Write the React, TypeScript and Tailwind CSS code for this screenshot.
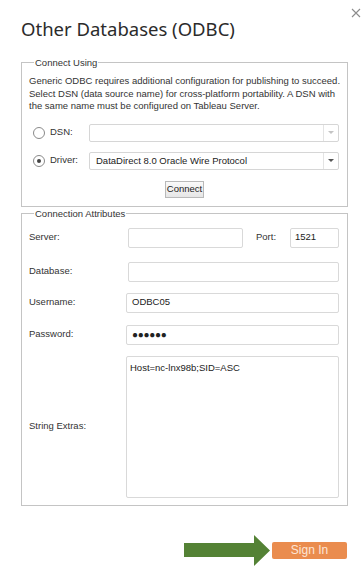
import React from 'react';

const uiFont = { fontFamily: '"Liberation Sans", Arial, sans-serif' };

const Radio: React.FC<{ checked?: boolean }> = ({ checked }) => (
  <div className="w-[12px] h-[12px] rounded-full border border-[#8a8a8a] bg-white flex items-center justify-center shrink-0">
    {checked && <div className="w-[4px] h-[4px] rounded-full bg-[#444]" />}
  </div>
);

const Select: React.FC<{ value?: string; disabled?: boolean }> = ({ value, disabled }) => (
  <div className="flex-1 h-[18px] border border-[#d6d6d6] rounded-[2px] bg-white flex items-center">
    <div className="flex-1 pl-[6px] text-[9.5px] text-[#222] leading-none">{value}</div>
    <div className="w-[15px] h-full border-l border-[#e4e4e4] flex items-center justify-center">
      <div
        className={`w-0 h-0 border-l-[3px] border-r-[3px] border-t-[3px] border-l-transparent border-r-transparent ${
          disabled ? 'border-t-[#c4c4c4]' : 'border-t-[#555]'
        }`}
      />
    </div>
  </div>
);

const Field: React.FC<{ value?: React.ReactNode; className?: string }> = ({ value, className }) => (
  <div
    className={`h-[20px] border border-[#d9d9d9] rounded-[2px] bg-white flex items-center pl-[5px] text-[9.5px] text-[#222] ${className ?? ''}`}
  >
    {value}
  </div>
);

export default function App() {
  return (
    <div className="w-[364px] h-[571px] bg-white relative text-[#333]" style={uiFont}>
      {/* close button */}
      <svg className="absolute left-[351px] top-[8px]" width="10" height="10" viewBox="0 0 10 10">
        <path d="M1 1 L9 9 M9 1 L1 9" stroke="#8c8c8c" strokeWidth="1.1" />
      </svg>

      <h1
        className="pl-[21px] pt-[16px] text-[18.5px] leading-[26px] text-[#2b2b2b]"
        style={{ fontFamily: '"Noto Sans", "Open Sans", sans-serif' }}
      >
        Other Databases (ODBC)
      </h1>

      <fieldset className="ml-[21px] mt-[14px] w-[327px] border border-[#c4c4c4] px-[7px] pb-[8px]">
        <legend className="ml-[5px] px-[1px] text-[9.5px] leading-[13px] text-[#333]">Connect Using</legend>
        <p className="pt-[6px] text-[9.5px] leading-[12.5px] text-[#333] whitespace-nowrap">
          Generic ODBC requires additional configuration for publishing to succeed.
          <br />
          Select DSN (data source name) for cross-platform portability. A DSN with
          <br />
          the same name must be configured on Tableau Server.
        </p>

        <div className="mt-[11px] flex items-center pr-[1px]">
          <div className="w-[60px] flex items-center gap-[5px] pl-[4px]">
            <Radio />
            <span className="text-[9.5px]">DSN:</span>
          </div>
          <Select disabled />
        </div>

        <div className="mt-[10px] flex items-center pr-[1px]">
          <div className="w-[60px] flex items-center gap-[5px] pl-[4px]">
            <Radio checked />
            <span className="text-[9.5px]">Driver:</span>
          </div>
          <Select value="DataDirect 8.0 Oracle Wire Protocol" />
        </div>

        <div className="mt-[11px] flex justify-center">
          <button className="h-[17px] px-[1px] border border-[#b9b9b9] bg-gradient-to-b from-[#fafafa] to-[#e6e6e6] text-[9.5px] text-[#222] leading-none">
            Connect
          </button>
        </div>
      </fieldset>

      <fieldset className="ml-[21px] w-[327px] border border-[#c4c4c4] pl-[7px] pr-[8px] pb-[7px]">
        <legend className="ml-[5px] px-[1px] text-[9.5px] leading-[13px] text-[#333]">Connection Attributes</legend>

        <div className="mt-[8px] flex items-center">
          <span className="w-[99px] text-[9.5px]">Server:</span>
          <Field className="w-[115px]" />
          <span className="ml-[13px] w-[34px] text-[9.5px]">Port:</span>
          <Field value="1521" className="flex-1 !pl-[4px]" />
        </div>

        <div className="mt-[14px] flex items-center">
          <span className="w-[99px] text-[9.5px]">Database:</span>
          <Field className="flex-1" />
        </div>

        <div className="mt-[11px] flex items-center">
          <span className="w-[97px] text-[9.5px]">Username:</span>
          <Field value="ODBC05" className="flex-1" />
        </div>

        <div className="mt-[12px] flex items-center">
          <span className="w-[97px] text-[9.5px]">Password:</span>
          <Field
            value={<span className="text-[10px] tracking-[-0.3px] text-[#222] leading-none">●●●●●●</span>}
            className="flex-1"
          />
        </div>

        <div className="mt-[11px] flex items-center">
          <span className="w-[97px] text-[9.5px]">String Extras:</span>
          <div className="flex-1 h-[142px] border border-[#d9d9d9] rounded-[2px] bg-white pl-[3px] pt-[4px] text-[9.5px] text-[#222]">
            Host=nc-lnx98b;SID=ASC
          </div>
        </div>
      </fieldset>

      <div className="mt-[29px] pr-[17px] flex justify-end items-center gap-[2px]">
        <svg width="86" height="31" viewBox="0 0 86 31">
          <path d="M0 8 H70 V0 L86 15.5 L70 31 V22 H0 Z" fill="#548235" />
        </svg>
        <button className="w-[75px] h-[17px] rounded-[2px] bg-[#ea8c4e] text-[12px] text-[#fde6d6] leading-none">
          Sign In
        </button>
      </div>
    </div>
  );
}
